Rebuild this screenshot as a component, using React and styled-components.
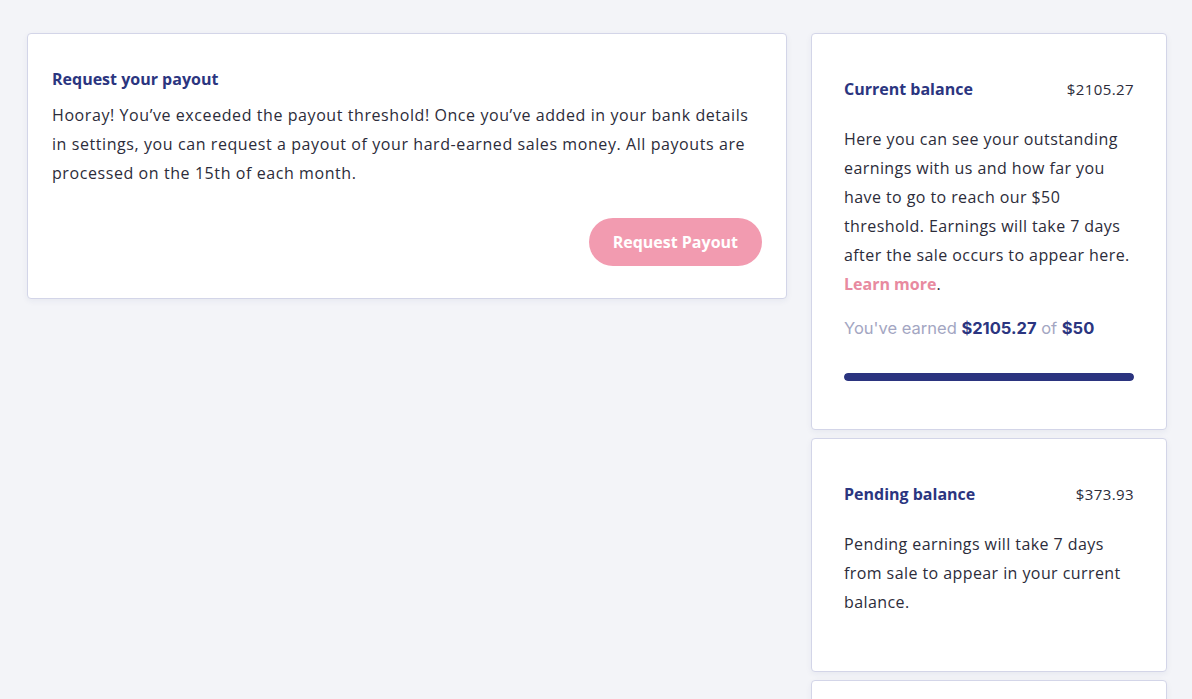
import React from "react";
import styled, { createGlobalStyle } from "styled-components";

const Global = createGlobalStyle`
  html, body { margin: 0; padding: 0; background: #f3f4f8; }
  body { font-family: "Open Sans", Lato, sans-serif; color: #2c2c3a; overflow: hidden; }
  * { box-sizing: border-box; }
`;

const Page = styled.div`
  display: grid;
  grid-template-columns: 1fr 356px;
  column-gap: 24px;
  align-items: start;
  padding: 33px 25px 0 27px;
  height: 699px;
`;

const Card = styled.section`
  background: #fff;
  border: 1px solid #d3d5e8;
  border-radius: 4px;
  box-shadow: 0 2px 6px rgba(40, 50, 120, 0.06);
`;

const PayoutCard = styled(Card)`
  padding: 35px 24px 32px 24px;
  display: flex;
  flex-direction: column;
`;

const Column = styled.div`
  display: flex;
  flex-direction: column;
  gap: 8px;
`;

const BalanceCard = styled(Card)`
  padding: ${(p) => p.$pad};
  min-height: ${(p) => p.$minH || "0"};
`;

const Title = styled.h2`
  margin: 0;
  font-size: 16px;
  line-height: 20px;
  font-weight: 700;
  color: #2b3580;
`;

const Body = styled.p`
  margin: ${(p) => p.$m || "0"};
  font-size: 16px;
  line-height: 29px;
  letter-spacing: ${(p) => p.$ls || "0.35px"};
  color: #2c2c3a;
`;

const Actions = styled.div`
  display: flex;
  justify-content: flex-end;
  margin-top: 30px;
`;

const Button = styled.button`
  height: 48px;
  padding: 0 24px;
  border: none;
  border-radius: 24px;
  background: #f29bb0;
  color: #fff;
  font-family: inherit;
  font-size: 16px;
  font-weight: 700;
  cursor: pointer;
`;

const Header = styled.div`
  display: flex;
  justify-content: space-between;
  align-items: center;
  height: 24px;
`;

const Amount = styled.span`
  font-size: 15px;
  letter-spacing: 0.4px;
  color: #2c2c3a;
`;

const Link = styled.a`
  color: #e88aa0;
  font-weight: 700;
  letter-spacing: 0;
  text-decoration: none;
`;

const Earned = styled.div`
  margin-top: 17px;
  font-family: Inter, sans-serif;
  font-size: 16.5px;
  line-height: 24px;
  color: #a3a6c2;
  b { color: #2b3580; font-weight: 700; }
`;

const Track = styled.div`
  margin-top: 33px;
  height: 8px;
  border-radius: 4px;
  background: #e6e8f2;
  overflow: hidden;
`;

const Fill = styled.div`
  height: 100%;
  background: #2b347f;
  border-radius: 4px;
`;

export default function App() {
  const earned = 2105.27;
  const threshold = 50;
  const pct = Math.min(100, (earned / threshold) * 100);
  return (
    <>
      <Global />
      <Page>
        <PayoutCard>
          <Title>Request your payout</Title>
          <Body $m="12px 0 0" $ls="0.58px">
            Hooray! You’ve exceeded the payout threshold! Once you’ve added in your bank details
            in settings, you can request a payout of your hard-earned sales money. All payouts are
            processed on the 15th of each month.
          </Body>
          <Actions>
            <Button>Request Payout</Button>
          </Actions>
        </PayoutCard>
        <Column>
          <BalanceCard $pad="43px 32px 48px 32px">
            <Header>
              <Title>Current balance</Title>
              <Amount>$2105.27</Amount>
            </Header>
            <Body $m="24px 0 0" $ls="0.42px">
              Here you can see your outstanding earnings with us and how far you have to go to
              reach our $50 threshold. Earnings will take 7 days after the sale occurs to appear
              here. <Link href="#">Learn more</Link>.
            </Body>
            <Earned>
              You've earned <b>$2105.27</b> of <b>$50</b>
            </Earned>
            <Track>
              <Fill style={{ width: `${pct}%` }} />
            </Track>
          </BalanceCard>
          <BalanceCard $pad="43px 32px 54px 32px">
            <Header>
              <Title>Pending balance</Title>
              <Amount>$373.93</Amount>
            </Header>
            <Body $m="24px 0 0" $ls="0.42px">
              Pending earnings will take 7 days from sale to appear in your current balance.
            </Body>
          </BalanceCard>
          <BalanceCard $pad="43px 32px" $minH="120px" />
        </Column>
      </Page>
    </>
  );
}
